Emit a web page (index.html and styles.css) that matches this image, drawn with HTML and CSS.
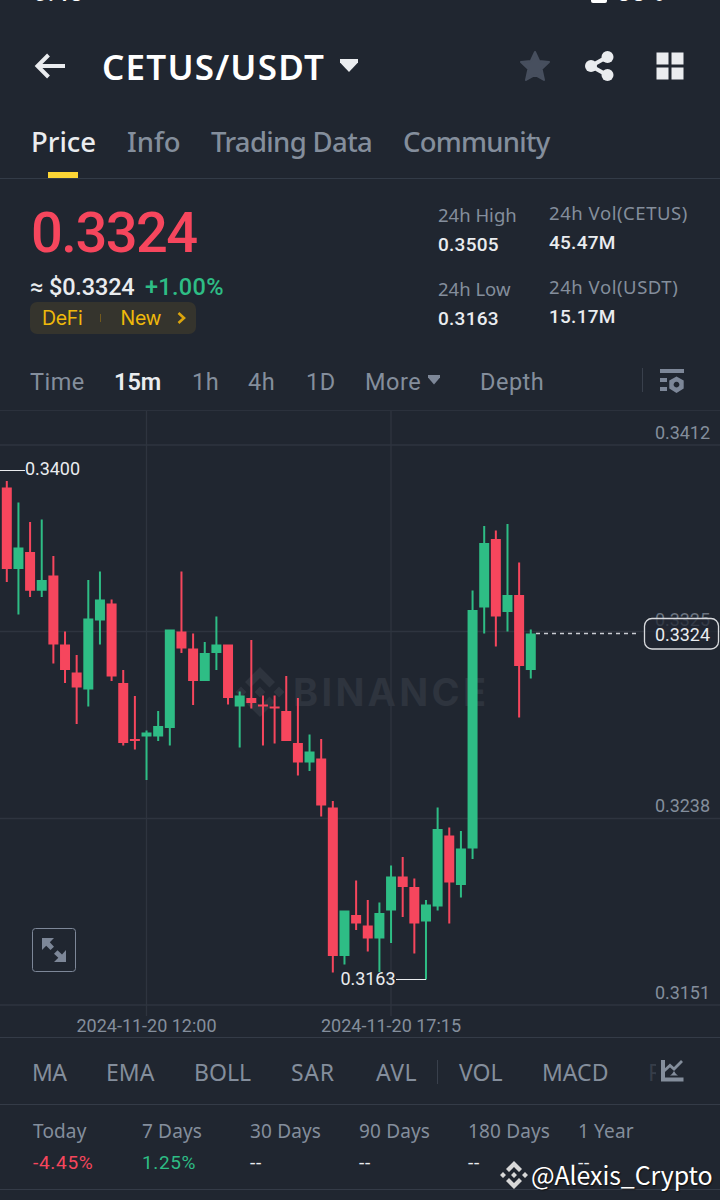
FILE: index.html
```html
<!DOCTYPE html>
<html lang="en">
<head>
<meta charset="utf-8">
<title>CETUS/USDT</title>
<link rel="stylesheet" href="styles.css">
</head>
<body>
<div class="status"><span class="clock">5:48</span><span class="battery"></span><span class="percent">88%</span></div>
<header class="header">
  <svg class="back" width="32" height="26" viewBox="0 0 32 26" fill="none" stroke="#eaecef" stroke-width="4"><path d="M31 13H4M14.500 2L3.500 13L14.500 24"/></svg>
  <h1 class="pair">CETUS/USDT</h1>
  <svg class="caret" width="20" height="15" viewBox="0 0 20 15" fill="#eaecef"><path d="M1 1H19V4.500L10 14L1 4.500Z"/></svg>
  <svg class="star" width="32" height="32" viewBox="0 0 32 32" fill="#474f5e" stroke="#474f5e" stroke-width="2" stroke-linejoin="round"><path d="M16 2L20.200 11L30 12L22.600 19L25 30L16 25L7 30L9.400 19L2 12L11.800 11Z"/></svg>
  <svg class="share" width="30" height="32" viewBox="0 0 30 32" fill="#eaecef"><path d="M7 16L23 7M7 16L23 25" stroke="#eaecef" stroke-width="4"/><circle cx="7" cy="16" r="6"/><circle cx="23.500" cy="7" r="6"/><circle cx="23.500" cy="25" r="6"/></svg>
  <svg class="grid-icon" width="28" height="28" viewBox="0 0 28 28" fill="#eaecef"><path d="M.5.5h12v12H.5zM15.500.5h12v12h-12zM.5 15.500h12v12H.5zM15.500 15.500h12v12h-12z"/></svg>
</header>
<nav class="tabs"><a class="tab active">Price</a><a class="tab info">Info</a><a class="tab trading">Trading Data</a><a class="tab community">Community</a></nav>
<section class="summary">
  <div class="quote">
    <div class="last">0.3324</div>
    <div class="fiat"><span class="usd">≈ $0.3324</span><span class="change">+1.00%</span></div>
    <div class="tags"><span>DeFi</span><i class="bar"></i><span>New</span><svg width="10" height="12" viewBox="0 0 10 12" fill="none" stroke="#dca50d" stroke-width="2.600"><path d="M1.500 1L7 6L1.500 11"/></svg></div>
  </div>
  <div class="stats">
    <div class="label">24h High</div><div class="value">0.3505</div>
    <div class="label second">24h Low</div><div class="value">0.3163</div>
  </div>
  <div class="stats volume">
    <div class="label">24h Vol(CETUS)</div><div class="value">45.47M</div>
    <div class="label second">24h Vol(USDT)</div><div class="value">15.17M</div>
  </div>
</section>
<nav class="intervals">
  <span class="time">Time</span><span class="m15">15m</span><span class="h1">1h</span><span class="h4">4h</span><span class="d1">1D</span><span class="more">More</span>
  <svg class="more-caret" width="14" height="10" viewBox="0 0 14 10" fill="#7d8798"><path d="M1 0H13V2.500L7 9.500L1 2.500Z"/></svg>
  <span class="depth">Depth</span><i class="rule"></i>
  <svg width="24" height="24" viewBox="0 0 24 24" fill="#7d8798"><path d="M0 0h24v4H0zM0 9h7v4H0zM0 18h7v4H0z"/><path fill-rule="evenodd" d="M16.500 7.500L23.700 11.500V19.500L16.500 24L9.300 19.500V11.500ZM16.500 12.700a2.900 2.900 0 1 0 .01 0Z"/></svg>
</nav>
<main class="chart-wrap">
  <svg class="chart" width="720" height="627" viewBox="0 411 720 627">
    <path class="gridline" d="M0 445H720M0 631.500H720M0 818.500H720M0 1005H720M146.500 411V1016M391 411V1016"/>
    <g class="brand">
      <path d="M260 667L275 682L269.500 687.500L260 678L250.500 687.500L245 682ZM241 686.500L246.500 692L241 697.500L235.500 692ZM279 686.500L284.500 692L279 697.500L273.500 692ZM260 686.500L265.500 692L260 697.500L254.500 692ZM260 717L245 702L250.500 696.500L260 706L269.500 696.500L275 702Z"/>
      <text x="293" y="706" textLength="193" lengthAdjust="spacing">BINANCE</text>
    </g>
    <g class="axis">
      <text x="655" y="439" textLength="55">0.3412</text>
      <text x="655" y="626" textLength="55" opacity=".75">0.3325</text>
      <text x="655" y="812" textLength="55">0.3238</text>
      <text x="655" y="999" textLength="55">0.3151</text>
      <text x="76.500" y="1032" textLength="140">2024-11-20 12:00</text>
      <text x="321" y="1032" textLength="140">2024-11-20 17:15</text>
    </g>
    <g id="candles"></g>
    <path d="M536 633.500H637" stroke="#c9ccd2" stroke-width="1.300" stroke-dasharray="4 4"/>
    <rect x="644.500" y="618.500" width="74" height="30.500" rx="7.500" fill="#202630" fill-opacity=".72" stroke="#d7d9dd" stroke-width="1.300"/>
    <path d="M0 470.500H25M396 979.500H426" stroke="#eaecef" stroke-width="1.200"/>
    <g class="mark">
      <text x="25" y="475" textLength="55">0.3400</text>
      <text x="340.500" y="985" textLength="55">0.3163</text>
      <text x="655" y="641" textLength="55">0.3324</text>
    </g>
    <g fill="#7d8798"><rect x="32.500" y="928.500" width="43" height="43" rx="3" fill="none" stroke="#7d8798"/>
      <path d="M42 938H54L49.800 942.200L54 946.700L50.500 950L46.200 945.700L42 950ZM66 962H54L58.300 957.800L54 953.800L57.500 950.300L62 954.500L66 950Z"/></g>
  </svg>
</main>
<nav class="indicators">
  <span class="ma">MA</span><span class="ema">EMA</span><span class="boll">BOLL</span><span class="sar">SAR</span><span class="avl">AVL</span><i class="rule"></i><span class="vol">VOL</span><span class="macd">MACD</span><span class="rsi">R</span>
  <svg width="23" height="24" viewBox="0 0 23 24" fill="none" stroke="#848e9c" stroke-width="4"><path d="M2 1V20.500H22.500"/><path stroke-width="2.800" d="M3 12L9 6.500L13 10L21 2"/><path fill="#848e9c" stroke="none" d="M13 12L15 15L17 16.500H9L11 15Z"/></svg>
</nav>
<section class="returns">
  <div class="p1"><span>Today</span><b class="down">-4.45%</b></div>
  <div class="p2"><span>7 Days</span><b class="up">1.25%</b></div>
  <div class="p3"><span>30 Days</span><b>--</b></div>
  <div class="p4"><span>90 Days</span><b>--</b></div>
  <div class="p5"><span>180 Days</span><b>--</b></div>
  <div class="p6"><span>1 Year</span><b>--</b></div>
</section>
<div class="credit">
  <svg width="28" height="28" viewBox="0 0 28 28" fill="#d8d8d8"><path d="M14 0L22 8L19 11L14 6L9 11L6 8ZM3 11L6 14L3 17L0 14ZM25 11L28 14L25 17L22 14ZM14 11L17 14L14 17L11 14ZM14 28L6 20L9 17L14 22L19 17L22 20Z"/></svg>
  <span>@Alexis_Crypto</span>
</div>
<script src="chart.js"></script>
</body>
</html>
```
FILE: styles.css
```css
* { box-sizing: border-box; }
body { margin: 0; width: 720px; height: 1200px; overflow: hidden; position: relative; background: #202630; color: #848e9c; font-family: "Noto Sans", "Open Sans", sans-serif; }
svg { display: block; flex: none; }
span { white-space: nowrap; }
.status { height: 12px; display: flex; align-items: flex-start; color: #fff; font: 500 24px/24px Roboto, sans-serif; overflow: hidden; padding-left: 33px; }
.clock, .percent { margin-top: -19px; letter-spacing: 1px; }
.clock { width: 558px; }
.battery { width: 16px; height: 3px; background: #fff; border-radius: 0 0 2px 2px; margin-right: 10px; }
.header { height: 108px; display: flex; align-items: flex-start; padding: 0 0 0 34px; }
.back { margin-top: 41px; }
.pair { margin: 31px 0 0 36px; width: 237px; font-size: 35px; line-height: 48px; font-weight: 600; color: #fff; letter-spacing: 1.2px; }
.caret { margin-top: 46px; }
.star { margin: 38px 0 0 160px; }
.share { margin: 38px 0 0 33px; }
.grid-icon { margin: 40px 0 0 42px; }
.tabs { height: 59px; display: flex; padding-left: 31px; border-bottom: 1px solid #333b47; }
.tab { font-size: 27.500px; line-height: 44px; font-weight: 500; white-space: nowrap; letter-spacing: 0; }
.tab.active { width: 96px; color: #eaecef; }
.tab.active::after { content: ""; display: block; width: 30px; height: 6px; margin: 8px 0 0 17px; background: #fcd535; }
.info { width: 84px; }
.trading { width: 192px; letter-spacing: -.65px; }
.community { letter-spacing: -.75px; }
.summary { height: 172px; display: flex; padding-left: 30px; }
.quote { width: 408px; font-family: Roboto, sans-serif; }
.last { margin: 22px 0 0 1px; font-size: 56px; line-height: 64px; font-weight: 500; color: #f6465d; letter-spacing: -1.500px; }
.fiat { margin-top: 8px; display: flex; font-size: 23.500px; line-height: 28px; font-weight: 500; color: #eaecef; }
.usd { width: 115px; letter-spacing: -.15px; }
.change { color: #2ebd85; letter-spacing: .3px; }
.tags { margin-top: 1px; width: 166px; height: 32px; border-radius: 7px; background: #35342d; color: #efb90b; display: flex; align-items: center; padding-left: 12px; font: 19.500px/32px Inter, sans-serif; letter-spacing: -.3px; }
.tags .bar { width: 1px; height: 8px; background: #72591d; margin: 0 19px 0 18px; }
.tags svg { margin-left: 16px; }
.stats { width: 111px; padding-top: 23px; }
.stats.volume { padding-top: 21px; width: 160px; }
.label { font-size: 18.500px; line-height: 26px; white-space: nowrap; }
.volume .label { letter-spacing: .55px; }
.label.second { margin-top: 19px; }
.value { margin-top: 3px; font: 500 19px/26px Roboto, sans-serif; color: #eaecef; letter-spacing: .25px; position: relative; top: 1px; }
.intervals { height: 60px; display: flex; align-items: flex-start; padding-left: 30px; font: 23.500px/30px Roboto, sans-serif; padding-top: 16px; letter-spacing: .5px; border-bottom: 1px solid #2b313c; }
.time { width: 84px; }
.m15 { width: 78px; color: #eaecef; font-weight: 600; letter-spacing: 0; }
.h1 { width: 56px; }
.h4 { width: 58px; }
.d1 { width: 59px; }
.more { width: 62px; }
.more-caret { margin-top: 8px; }
.depth { margin-left: 39px; width: 162px; }
.rule { width: 1px; height: 24px; background: #39404c; }
.intervals .rule { margin: 1px 17px 0 0; }
.intervals > svg:last-child { margin-top: 2px; }
.chart { font-family: Roboto, sans-serif; font-size: 18px; }
.chart-wrap { height: 627px; border-bottom: 1px solid #343b47; overflow: hidden; }
.gridline { fill: none; stroke: #2e343f; stroke-width: 1.300; }
.brand { fill: #2e343e; font: 700 38px Inter, sans-serif; }
.axis { fill: #848e9c; }
.mark { fill: #eaecef; }
.rise { fill: #2ebd85; }
.fall { fill: #f6465d; }
.indicators { height: 67px; display: flex; align-items: flex-start; padding: 18px 0 0 32px; font-size: 23px; line-height: 32px; border-bottom: 1px solid #343b47; }
.ma { width: 74px; letter-spacing: -.5px; }
.ema { width: 88px; }
.boll { width: 97px; }
.sar { width: 85px; letter-spacing: .7px; }
.avl { width: 61px; letter-spacing: .5px; }
.indicators .rule { margin: 4px 21px 0 0; }
.vol { width: 83px; }
.macd { width: 106px; }
.rsi { width: 8px; margin-right: 5px; overflow: hidden; opacity: .22; }
.indicators svg { margin-top: 3px; }
.returns { height: 85px; display: flex; padding: 13px 0 0 33px; border-bottom: 1px solid #343b47; font-size: 19px; line-height: 26px; letter-spacing: .15px; }
.returns div { display: flex; flex-direction: column; }
.returns b { margin-top: 6px; font-family: Roboto, sans-serif; font-weight: 400; letter-spacing: .7px; color: #eaecef; }
.returns .down { color: #f6465d; }
.returns .up { color: #2ebd85; letter-spacing: .6px; }
.p1 { width: 109px; }
.p2 { width: 108px; }
.p3, .p4 { width: 109px; }
.p5 { width: 110px; }
.credit { position: absolute; left: 500px; top: 1160px; display: flex; align-items: center; gap: 3px; color: #fff; font: 25px/32px "Noto Sans CJK SC", sans-serif; letter-spacing: -.12px; text-shadow: 1px 1px 1px #111; }
.credit span { margin-top: -2px; }
```
FILE: chart.js
```js
// Each row: direction, wick top, body top, body bottom, wick bottom.
const candles = [
  ["fall",481,487.5,569,582],["rise",502.5,547.5,569,614.5],["fall",522,552,590.7,597],
  ["rise",519.5,580,590.7,597],["fall",556,575.5,644.5,663.5],["fall",631.5,644.5,670,683],
  ["fall",655,672.5,687.5,724],["rise",580,618.5,689.5,706.5],["rise",571.5,599.5,620.5,644.5],
  ["fall",599.5,603.5,676.5,681],["fall",670,683,743,745.5],["fall",696,739,741,749.5],
  ["rise",730.5,732.5,736.5,780],["rise",711,726,736.5,741],["rise",629.5,629.5,728,745.5],
  ["fall",571.5,631.5,648.5,653],["fall",633.5,648.5,681,705],["rise",642,653,681,681],
  ["rise",616.5,644.5,653,670],["fall",644.5,644.5,698,704.5],["rise",691.5,695.5,706.5,747.5],
  ["fall",640,698,703,708.5],["fall",695.5,704.5,706.5,745.5],["fall",695.5,706.5,708.5,743.5],
  ["fall",676,711,741,741],["fall",698,743,762.5,775.5],["rise",734.5,751.5,762.5,771],
  ["fall",739,758.5,805.5,816.5],["fall",801,807.5,956,972.5],["rise",910.5,910.5,956,964.5],
  ["fall",880.5,915,923.5,930],["fall",900,925.5,938.5,951.5],["rise",902.5,913,938.5,972],
  ["rise",865.5,876.5,910.5,943],["fall",857,876.5,887,917],["fall",878.5,887,923.5,953.5],
  ["rise",900,904.5,921.5,979.5],["rise",807.5,829,906.5,910.5],["fall",827.5,835.5,882.5,923.5],
  ["rise",831,848.5,885,897.5],["rise",590.5,610,848.5,859],["rise",526,543,607.5,633.5],
  ["fall",530.5,539,616.5,646.5],["rise",524,595,612,631.5],["fall",562.5,595,666,717.5],
  ["rise",629.5,633.5,670,678.5]
];
document.getElementById("candles").innerHTML = candles.map(([kind, high, top, bottom, low], i) => {
  const x = 6.8 + i * 11.644;
  return `<path class="${kind}" d="M${x - 1} ${high}h2V${low}h-2zM${x - 5} ${top}h10V${bottom}h-10z"/>`;
}).join("");
```
